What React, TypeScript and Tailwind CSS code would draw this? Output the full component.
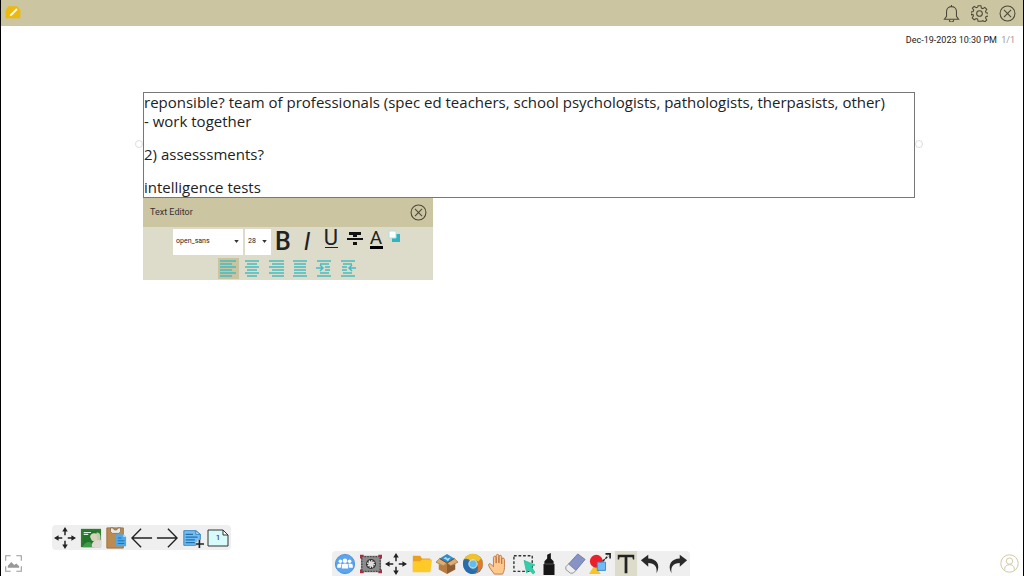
import { ReactNode } from "react";

interface ToolProps {
    label: string
    active?: boolean
    children: ReactNode
}

const Tool = ({ label, active, children }: ToolProps) => (
    <button
        type="button"
        aria-label={label}
        aria-pressed={active}
        className={`flex h-[25px] w-[22px] items-center justify-center ${active ? "bg-[#dddccb]" : ""}`}
    >
        {children}
    </button>
)

const Icon = ({ size = 22, children }: { size?: number, children: ReactNode }) => (
    <svg width={size} height={size} viewBox="0 0 24 24" fill="none" className="shrink-0">
        {children}
    </svg>
)

const CloseIcon = () => (
    <Icon size={17}>
        <g stroke="#4b4838" strokeWidth="1.5">
            <circle cx="12" cy="12" r="10.5" />
            <path d="M7 7l10 10M17 7L7 17" />
        </g>
    </Icon>
)

const MoveIcon = () => (
    <Icon>
        <path d="M12 2v7M12 15v7M2 12h7M15 12h7" stroke="#222" strokeWidth="1.6" />
        <path d="M12 0l3 5H9zM12 24l3-5H9zM0 12l5-3v6zM24 12l-5-3v6z" fill="#222" />
    </Icon>
)

/* Page navigation */
const pageTools = [
    { label: "Move toolbar", icon: <MoveIcon /> },
    {
        label: "Board background",
        icon: (
            <Icon>
                <path d="M1 2h22v20H1z" fill="#2f7d32" />
                <path d="M3 4h18v16H3z" fill="#22762c" />
                <path d="M4 6h8M4 8h5" stroke="#dcefdc" strokeWidth="1.2" />
                <path d="M11 11c0-3 3-5 6-4 3 0 4 3 3 6l-2 3-5-1z" fill="#d8d2bb" />
                <path d="M3 22c1-4 5-7 9-5l3 5z" fill="#41994a" />
                <path d="M13 22v-3c1-4 5-5 10-5v8z" fill="#dfd9d3" />
                <path d="M18 6c4-1 5 4 4 9l-3-1z" fill="#c3c9ae" />
            </Icon>
        ),
    },
    {
        label: "Paste",
        icon: (
            <Icon>
                <path d="M2 1h18v22H2z" fill="#bd8b52" stroke="#9d7040" />
                <path d="M6 1h3c0 3 5 3 5 0h3v4l-2 2H8L6 5z" fill="#e9e7e3" stroke="#806647" strokeWidth=".8" />
                <path d="M12 8h8l3 3v10H12z" fill="#4da9e8" />
                <path d="M20 8v3h3" fill="#b8e0fa" />
                <path d="M14 12h4M14 15h7M14 18h7" stroke="#1b70b5" />
            </Icon>
        ),
    },
    {
        label: "Previous page",
        icon: <Icon><path d="M23 12H2M11 2L1 12l10 10" stroke="#222" strokeWidth="1.5" /></Icon>,
    },
    {
        label: "Next page",
        icon: <Icon><path d="M1 12h21M13 2l10 10-10 10" stroke="#222" strokeWidth="1.5" /></Icon>,
    },
    {
        label: "Add page",
        icon: (
            <Icon>
                <path d="M2 4h13l5 4v12H2z" fill="#73bdf2" stroke="#3382b8" />
                <path d="M15 4v4h5z" fill="#c5e5fb" stroke="#3382b8" />
                <path d="M4 8h8M4 11h13M4 14h10M4 17h10" stroke="#1f70ad" strokeWidth="1.2" />
                <path d="M19 14v9M15 18.500h9" stroke="#eee" strokeWidth="4" />
                <path d="M19 14v9M15 18.500h9" stroke="#222" strokeWidth="1.800" />
            </Icon>
        ),
    },
]

/* Main drawing tools */
const drawTools = [
    {
        label: "Participants",
        icon: (
            <Icon>
                <circle cx="12" cy="12" r="10.500" fill="#5aa5ee" stroke="#4b8fd6" />
                <g fill="#fff">
                    <circle cx="7" cy="9" r="2" />
                    <circle cx="17" cy="9" r="2" />
                    <circle cx="12" cy="8.500" r="2.500" />
                    <path d="M3.500 16v-2q0-2.500 3.500-2.500l1.500.5q-1 1-1 4zM20.500 16v-2q0-2.500-3.500-2.500l-1.500.5q1 1 1 4zM8.500 17v-3q0-2.500 3.500-2.500t3.500 2.500v3z" />
                </g>
            </Icon>
        ),
    },
    {
        label: "Capture",
        icon: (
            <Icon>
                <path d="M1 3h22v18H1z" fill="#8b8b8b" />
                <path d="M2 4h20v16H2z" stroke="#444" strokeWidth="1.500" strokeDasharray="1.500 1.500" />
                <path d="M1 6V3h3M20 3h3v3M1 18v3h3M20 21h3v-3" stroke="#a52c43" strokeWidth="2" />
                <circle cx="12" cy="12" r="5.500" fill="#333" />
                <circle cx="12" cy="12" r="3" fill="#ddd" />
                <circle cx="12" cy="12" r="3.500" stroke="#eee" strokeWidth="1.500" strokeDasharray="1.500 1.200" />
            </Icon>
        ),
    },
    { label: "Move", icon: <MoveIcon /> },
    {
        label: "Open",
        icon: (
            <Icon>
                <path d="M2 3h8l2 3h9v14H2z" fill="#eba01c" />
                <path d="M2 9h8l2-2h11l-2 14H2z" fill="#ffc928" />
            </Icon>
        ),
    },
    {
        label: "Resources",
        icon: (
            <Icon>
                <path d="M12 1l8 5-8 5-8-5z" fill="#338bc5" />
                <path d="M8 6l3-2 1 2 4-1-3 4-2-2z" fill="#a6dcf8" />
                <path d="M4 6L0 10l8 4 4-3zM20 6l4 4-8 4-4-3z" fill="#dfad70" stroke="#8b6339" strokeWidth=".7" />
                <path d="M3 12l5 2 4-3v12l-9-5z" fill="#b67d42" />
                <path d="M21 12l-5 2-4-3v12l9-5z" fill="#8e5d30" />
                <path d="M4 6l8 5 8-5" stroke="#65492e" />
            </Icon>
        ),
    },
    {
        label: "Browser",
        icon: (
            <Icon>
                <circle cx="12" cy="12" r="11" fill="#3378b5" />
                <path d="M2 7C6-1 17-1 21 6c2 3 2 6 1 9-4-7-9-9-13-6C7 6 5 6 2 7z" fill="#f0c22e" />
                <path d="M21 6c4 7 0 16-9 17 6-3 7-7 4-11 1-2 3-4 5-6z" fill="#e07a2c" />
                <path d="M2 7c-3 7 2 16 10 16 2-1 4-2 5-4-7 1-11-4-10-10-2-2-3-2-5-2z" fill="#2a6cab" />
                <circle cx="12" cy="12" r="4.500" fill="#61bdf0" stroke="#f6edcc" />
            </Icon>
        ),
    },
    {
        label: "Pan",
        icon: (
            <Icon>
                <path
                    d="M8 23c-2-3-5-6-6-9-1-2 1-3 2-2l3 3V5c0-2 3-2 3 0v6-8c0-2 3-2 3 0v8-7c0-2 3-2 3 0v8-5c0-2 3-2 3 0v9c0 3-1 5-2 7z"
                    fill="#ffc98e"
                    stroke="#b87545"
                />
            </Icon>
        ),
    },
    {
        label: "Select",
        icon: (
            <Icon>
                <path d="M1 3h20v17H1z" stroke="#333" strokeWidth="1.500" strokeDasharray="3 2" />
                <path d="M12 8l12 5-4 2 4 6-2 2-5-5-2 4z" fill="#32cfac" stroke="#20a98b" strokeWidth=".6" />
            </Icon>
        ),
    },
    {
        label: "Pen",
        icon: (
            <Icon>
                <path d="M10 2l4-2v6l3 3v3H7V9l3-3zM6 12h12v12H6z" fill="#161616" />
                <path d="M7 12h10" stroke="#555" />
            </Icon>
        ),
    },
    {
        label: "Eraser",
        icon: (
            <Icon>
                <path d="M15 1l8 6-10 12-8-7z" fill="#8793c6" stroke="#737ba2" />
                <path d="M5 12l8 7-3 3H7l-5-4v-3z" fill="#eee" stroke="#8b8c96" />
            </Icon>
        ),
    },
    {
        label: "Shapes",
        icon: (
            <Icon>
                <path d="M6 13l7 10H0z" fill="#f5c52a" />
                <circle cx="8" cy="9" r="7" fill="#eb202b" />
                <path d="M9 10h9v9H9z" fill="#70baf6" stroke="#3e89c7" />
                <path d="M15 9l6-6" stroke="#222" strokeWidth="1.600" strokeDasharray="3 1" />
                <path d="M18 1h5v5" stroke="#222" strokeWidth="1.800" />
            </Icon>
        ),
    },
    {
        label: "Text",
        active: true,
        icon: <Icon><path d="M3 2h18v5h-1.500L19 4.500h-5.500V22h-3V4.500H5L4.500 7H3z" fill="#222" /></Icon>,
    },
    {
        label: "Undo",
        icon: <Icon><path d="M1 8l8-6v4c9 0 14 7 9 16 1-7-2-11-9-11v4z" fill="#292929" /></Icon>,
    },
    {
        label: "Redo",
        icon: <Icon><path d="M23 8l-8-6v4C6 6 1 13 6 22 5 15 8 11 15 11v4z" fill="#292929" /></Icon>,
    },
]

const alignTools = [
    { label: "Align left", path: "M0 1h16M0 4h12M0 7h16M0 10h12M0 13h16M0 16h12" },
    { label: "Align center", path: "M1 1h14M3 4h10M1 7h14M3 10h10M1 13h14M3 16h10" },
    { label: "Align right", path: "M1 1h15M4 4h12M1 7h15M4 10h12M1 13h15M4 16h12" },
    { label: "Justify", path: "M1 1h14M2 4h12M2 7h12M2 10h12M2 13h12M1 16h14" },
    { label: "Increase indent", path: "M1 1h14M4 4h9M9 7h5M9 10h5M4 13h9M1 16h14M0 8h7M4 5l3 3-3 3" },
    { label: "Decrease indent", path: "M1 1h14M3 4h9M2 7h5M2 10h5M3 13h9M1 16h14M9 8h7M12 5L9 8l3 3" },
]

const PickList = ({ label, value, width }: { label: string, value: string, width: string }) => (
    <label className={`relative flex h-[26px] items-center bg-white ${width}`}>
        <select
            aria-label={label}
            defaultValue={value}
            className="h-full w-full appearance-none pl-[3px] text-[7px] text-[#222] outline-none"
        >
            <option>{value}</option>
        </select>
        <svg width="5" height="3" viewBox="0 0 6 4" className="pointer-events-none absolute right-1">
            <path d="M0 0h6L3 4z" fill="#333" />
        </svg>
    </label>
)

const TextEditor = () => (
    <section className="w-[290px] bg-[#dddccb]">
        {/* title */}
        <div className="flex h-[29px] items-center justify-between bg-[#cbc5a2] pr-[6px] pl-[7px]">
            <h2 className="text-[9px] text-[#333]">Text Editor</h2>
            <button type="button" aria-label="Close text editor"><CloseIcon /></button>
        </div>
        {/* font */}
        <div className="flex h-[29px] items-center justify-center">
            <PickList label="Font" value="open_sans" width="mr-[2px] w-[70px]" />
            <PickList label="Font size" value="28" width="w-[26px]" />
            <button type="button" className="h-[29px] w-6 text-[25px] leading-6 font-medium">B</button>
            <button type="button" className="h-[29px] w-6 text-[25px] leading-6 italic">I</button>
            <button type="button" aria-label="Underline" className="flex h-[29px] w-6 flex-col items-center pt-[2px]">
                <span className="text-[22px] leading-[18px]">U</span>
                <span className="h-px w-[13px] bg-[#222]" />
            </button>
            <button type="button" aria-label="Strikethrough" className="flex h-[29px] w-6 justify-center pt-1">
                <svg width="16" height="16" viewBox="0 0 16 16">
                    <path d="M2 1h12v3h-4v2H6V4H2zM0 7h16v2H0zM6 11h4v3H6z" fill="#111" />
                </svg>
            </button>
            <button type="button" aria-label="Text colour" className="flex h-[29px] w-[18px] flex-col items-center pt-[2px]">
                <span className="text-[19px] leading-[17px]">A</span>
                <span className="h-[3px] w-[13px] bg-black" />
            </button>
            <button type="button" aria-label="Layer" className="flex h-[29px] w-[18px] justify-center pt-[3px]">
                <svg width="12" height="12" viewBox="0 0 12 12">
                    <path d="M4 4h8v8H4z" fill="#32b3be" />
                    <path d="M1 1h7v7H1z" fill="#fff" stroke="#a8e3e8" />
                </svg>
            </button>
        </div>
        {/* alignment */}
        <div className="flex h-6 items-center justify-center gap-x-[3px]">
            {alignTools.map((tool, index) => (
                <button
                    type="button"
                    aria-label={tool.label}
                    key={tool.label}
                    className={`flex h-[21px] w-[21px] items-center justify-center ${index === 0 ? "bg-[#c9c39f]" : ""}`}
                >
                    <svg width="16" height="17" viewBox="0 0 16 17">
                        <path d={tool.path} stroke="#45bcc0" strokeWidth="1.5" fill="none" />
                    </svg>
                </button>
            ))}
        </div>
    </section>
)

export default function App() {
    return (
        <div className="flex min-h-screen flex-col border-x border-black bg-white font-['Roboto',sans-serif] text-[#222]">
            <header className="flex h-[26px] items-center justify-between bg-[#cbc5a2] pr-[7px] pl-1">
                <button type="button" aria-label="Menu">
                    <Icon size={16}>
                        <path d="M5 2h13l5 6v12H1V8z" fill="#edb90b" />
                        <path d="M7 17l1-3 9-9 2 2-9 9z" fill="#fff8de" />
                    </Icon>
                </button>
                <div className="flex items-center gap-x-[11px]">
                    <button type="button" aria-label="Notifications">
                        <Icon size={17}>
                            <path d="M12 0v2M2 20h20l-3-4V9c0-9-14-9-14 0v7zM9 21c0 4 6 4 6 0" stroke="#4b4838" strokeWidth="1.500" />
                        </Icon>
                    </button>
                    <button type="button" aria-label="Settings">
                        <Icon size={17}>
                            <path
                                d="M10 1h4l.7 3.300 2 .8 2.800-1.800 2.800 2.800-1.800 2.800.8 2 3.200.7v4l-3.200.7-.8 2 1.800 2.800-2.800 2.800-2.800-1.800-2 .8L14 23h-4l-.7-3.100-2-.8-2.800 1.800-2.800-2.800 1.800-2.800-.8-2L0 14v-4l3-.7.8-2L2 4.500 4.500 2l2.800 1.800 2-.8z"
                                stroke="#4b4838"
                                strokeWidth="1.500"
                            />
                            <circle cx="12" cy="12" r="4" stroke="#4b4838" strokeWidth="1.500" />
                        </Icon>
                    </button>
                    <button type="button" aria-label="Close"><CloseIcon /></button>
                </div>
            </header>

            <main className="flex flex-1 flex-col">
                <p className="mt-2 mr-2 text-right text-[9px] leading-3">
                    Dec-19-2023 10:30 PM <span className="ml-[2px] text-[#999]">1/1</span>
                </p>

                {/* text object */}
                <div className="mt-[46px] mr-[108px] ml-[142px]">
                    <div className="relative">
                        <div
                            contentEditable
                            suppressContentEditableWarning
                            role="textbox"
                            aria-label="Note text"
                            aria-multiline="true"
                            className="border border-[#777] font-['Open_Sans',sans-serif] text-[15px] leading-[19px] outline-none"
                        >
                            <p>reponsible? team of professionals (spec ed teachers, school psychologists, pathologists, therpasists, other)</p>
                            <p className="mb-[14px]">- work together</p>
                            <p className="mb-[14px]">2) assesssments?</p>
                            <p>intelligence tests</p>
                        </div>
                        <span className="absolute top-12 -left-2 size-2 rounded-full border border-[#ddd] bg-white" />
                        <span className="absolute top-12 -right-2 size-2 rounded-full border border-[#ddd] bg-white" />
                    </div>
                    <TextEditor />
                </div>
            </main>

            <footer>
                <nav aria-label="Pages" className="ml-[51px] flex h-[25px] w-[179px] items-center justify-between rounded-sm bg-[#efefef] px-[2px]">
                    {pageTools.map((tool) => (
                        <Tool key={tool.label} label={tool.label}>{tool.icon}</Tool>
                    ))}
                    <button type="button" className="relative flex h-[25px] w-[22px] items-center justify-center text-[8px]">
                        <svg width="22" height="18" viewBox="0 0 22 18" className="absolute">
                            <path d="M1 1h15l5 5v11H1z" fill="#d7fafa" stroke="#333" />
                            <path d="M16 1v5h5z" fill="#fff" stroke="#333" />
                        </svg>
                        <span className="relative">1</span>
                    </button>
                </nav>
                <div className="flex h-[26px] items-end justify-between px-1">
                    <button type="button" aria-label="Insert image" className="flex h-[25px] items-center">
                        <Icon size={17}>
                            <path d="M1 8V1h7M16 1h7v7M23 16v7h-7M8 23H1v-7" stroke="#999" strokeWidth="1.500" />
                            <path d="M4 18v-3l5-5 4 4 3-2 4 4v2z" fill="#999" />
                        </Icon>
                    </button>
                    <nav aria-label="Tools" className="flex w-[358px] items-center justify-between rounded-t-sm bg-[#efefef] px-[2px]">
                        {drawTools.map((tool) => (
                            <Tool key={tool.label} label={tool.label} active={tool.active}>{tool.icon}</Tool>
                        ))}
                    </nav>
                    <button type="button" aria-label="Account" className="flex h-[25px] items-center">
                        <Icon size={19}>
                            <g stroke="#cbc5a2" strokeWidth="1.200">
                                <circle cx="12" cy="12" r="11" />
                                <circle cx="12" cy="9" r="4" />
                                <path d="M6 20v-2c0-6 12-6 12 0v2" />
                            </g>
                        </Icon>
                    </button>
                </div>
            </footer>
        </div>
    )
}
